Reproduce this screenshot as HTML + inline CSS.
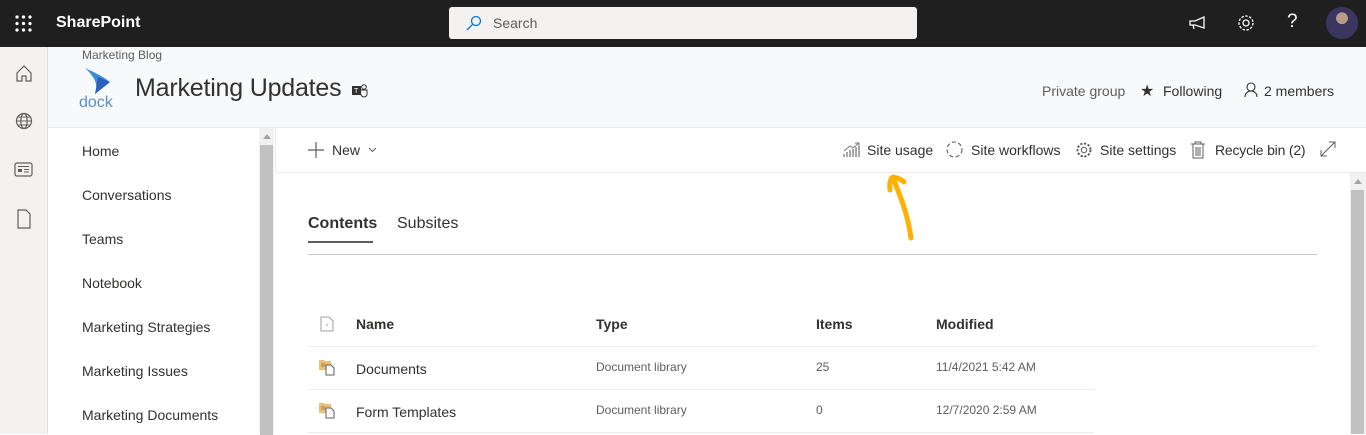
<!DOCTYPE html>
<html><head><meta charset="utf-8"><style>
*{box-sizing:border-box;margin:0;padding:0}
body{width:1366px;height:434px;overflow:hidden;font-family:"Segoe UI","Liberation Sans",sans-serif;background:#fff;color:#323130;position:relative}
.abs{position:absolute}
#top{left:0;top:0;width:1366px;height:47px;background:#1f1f1f}
#rail{left:0;top:47px;width:48px;height:387px;background:#f3f2f1;border-right:1px solid #e1dfdd}
#hdr{left:48px;top:47px;width:1318px;height:81px;background:#f8f9fa;border-bottom:1px solid #edebe9}
#nav{left:48px;top:128px;width:211px;height:306px;background:#fff}
.nv{position:absolute;left:82px;font-size:14px;color:#323130}
#nsb{left:259px;top:128px;width:15px;height:306px;background:#f1f1f1}
#cmd{left:275px;top:128px;width:1091px;height:45px;border-bottom:1px solid #edebe9;border-left:1px solid #edebe9}
.t{position:absolute;font-size:14px;white-space:nowrap}
.hl{position:absolute;height:1px;background:#edebe9}
</style></head><body>
<div id="top" class="abs">
 <svg class="abs" style="left:15px;top:15px" width="17" height="17"><g fill="#fff"><circle cx="2" cy="2" r="1.6"/><circle cx="8.5" cy="2" r="1.6"/><circle cx="15" cy="2" r="1.6"/><circle cx="2" cy="8.5" r="1.6"/><circle cx="8.5" cy="8.5" r="1.6"/><circle cx="15" cy="8.5" r="1.6"/><circle cx="2" cy="15" r="1.6"/><circle cx="8.5" cy="15" r="1.6"/><circle cx="15" cy="15" r="1.6"/></g></svg>
 <div class="t" style="left:56px;top:14px;color:#fff;font-weight:bold;font-size:16px">SharePoint</div>
 <div class="abs" style="left:449px;top:7px;width:468px;height:32px;background:#f3f2f1;border-radius:3px"></div>
 <svg class="abs" style="left:466px;top:15px" width="16" height="16"><circle cx="10" cy="6" r="4.5" fill="none" stroke="#0078d4" stroke-width="1.3"/><line x1="6.8" y1="9.2" x2="1" y2="15" stroke="#0078d4" stroke-width="1.3"/></svg>
 <div class="t" style="left:493px;top:15px;color:#605e5c">Search</div>
 <svg class="abs" style="left:1188px;top:14px" width="20" height="18"><path d="M2 7h5l9-4v11l-9-3H2z M5 11l1 4" fill="none" stroke="#fff" stroke-width="1.3"/></svg>
 <svg class="abs" style="left:1236px;top:13px" width="20" height="20"><circle cx="10" cy="10" r="3" fill="none" stroke="#fff" stroke-width="1.3"/><circle cx="10" cy="10" r="7" fill="none" stroke="#fff" stroke-width="1.3" stroke-dasharray="2.5 1.5"/></svg>
 <div class="t" style="left:1287px;top:11px;color:#fff;font-size:19px">?</div>
 <div class="abs" style="left:1326px;top:7px;width:32px;height:32px;border-radius:50%;background:radial-gradient(circle at 50% 35%,#b89a88 0 22%,#3b3660 23% 100%),#888"></div>
</div>
<div id="rail" class="abs">
 <svg class="abs" style="left:15px;top:17px" width="18" height="18"><path d="M2 9L9 2l7 7v8h-5v-5H7v5H2z" fill="none" stroke="#605e5c" stroke-width="1.2"/></svg>
 <svg class="abs" style="left:15px;top:65px" width="18" height="18"><circle cx="9" cy="9" r="7.5" fill="none" stroke="#605e5c" stroke-width="1.2"/><ellipse cx="9" cy="9" rx="3.2" ry="7.5" fill="none" stroke="#605e5c" stroke-width="1.2"/><path d="M1.5 9h15M3 5h12M3 13h12" stroke="#605e5c" stroke-width="1.1"/></svg>
 <svg class="abs" style="left:14px;top:115px" width="20" height="16"><rect x="1" y="1" width="17" height="13" rx="2" fill="none" stroke="#605e5c" stroke-width="1.2"/><rect x="4" y="7" width="4" height="3" fill="#605e5c"/><path d="M4 4.5h11M10 7.5h5M10 10h5" stroke="#605e5c"/></svg>
 <svg class="abs" style="left:17px;top:162px" width="14" height="20"><path d="M1 1h8l4 4v14H1z" fill="none" stroke="#605e5c" stroke-width="1.2"/></svg>
</div>
<div id="hdr" class="abs">
 <div class="t" style="left:34px;top:1px;font-size:12px;color:#605e5c">Marketing Blog</div>
 <svg class="abs" style="left:35px;top:20px" width="30" height="28"><path d="M2 1C8 4 18 8 27 15L12 27C15 20 14 12 2 1z" fill="#3a8fd6"/><path d="M15 10L27 15 12 27z" fill="#2d5fbf"/></svg>
 <div class="t" style="left:31px;top:47px;font-size:16px;color:#5a8fc8">dock</div>
 <div class="t" style="left:87px;top:27px;font-size:25px;color:#323130;letter-spacing:-0.2px">Marketing Updates</div>
 <svg class="abs" style="left:303px;top:35px" width="18" height="16"><rect x="1" y="4" width="9" height="9" fill="#323130"/><circle cx="13" cy="5" r="2.3" fill="none" stroke="#323130"/><path d="M9 8h7v4a3 3 0 0 1-6 0" fill="none" stroke="#323130"/><text x="3" y="11" font-size="7" fill="#fff">T</text></svg>
 <div class="t" style="left:994px;top:36px;color:#605e5c">Private group</div>
 <div class="t" style="left:1092px;top:34px;font-size:16px;color:#323130">★</div>
 <div class="t" style="left:1115px;top:36px;color:#323130">Following</div>
 <svg class="abs" style="left:1196px;top:35px" width="14" height="16"><circle cx="7" cy="5" r="4" fill="none" stroke="#323130" stroke-width="1.1"/><path d="M1 15c0-4 3-6 6-6s6 2 6 6" fill="none" stroke="#323130" stroke-width="1.1"/></svg>
 <div class="t" style="left:1216px;top:36px;color:#323130">2 members</div>
</div>
<div id="nav" class="abs"></div>
<div class="nv" style="top:143px">Home</div>
<div class="nv" style="top:187px">Conversations</div>
<div class="nv" style="top:231px">Teams</div>
<div class="nv" style="top:275px">Notebook</div>
<div class="nv" style="top:319px">Marketing Strategies</div>
<div class="nv" style="top:363px">Marketing Issues</div>
<div class="nv" style="top:407px">Marketing Documents</div>
<div id="nsb" class="abs"><div class="abs" style="left:4px;top:6px;border:4px solid transparent;border-bottom:5px solid #a3a3a3;border-top:0"></div><div class="abs" style="left:1px;top:17px;width:13px;height:290px;background:#c1c1c1"></div></div>
<div id="cmd" class="abs"></div>
<svg class="abs" style="left:308px;top:142px" width="16" height="16"><path d="M8 0v16M0 8h16" stroke="#605e5c" stroke-width="1.2"/></svg>
<div class="t" style="left:332px;top:142px">New</div>
<svg class="abs" style="left:368px;top:147px" width="9" height="6"><path d="M1 1l3.5 3.5L8 1" fill="none" stroke="#605e5c"/></svg>
<svg class="abs" style="left:843px;top:142px" width="18" height="16"><path d="M1 15V12M4 15V10M7 15V8M10 15V7M13 15V5M16 15V4" stroke="#7a7a7a" stroke-width="1.3"/><path d="M1 9L7 4l3 2 6-5M12 1h4v4" fill="none" stroke="#7a7a7a"/></svg>
<div class="t" style="left:867px;top:142px">Site usage</div>
<svg class="abs" style="left:945px;top:140px" width="19" height="19"><circle cx="9.5" cy="9.5" r="7.5" fill="none" stroke="#605e5c" stroke-width="1.1" stroke-dasharray="4 2.5"/></svg>
<div class="t" style="left:971px;top:142px">Site workflows</div>
<svg class="abs" style="left:1075px;top:141px" width="18" height="18"><circle cx="9" cy="9" r="2.7" fill="none" stroke="#605e5c"/><circle cx="9" cy="9" r="6.5" fill="none" stroke="#605e5c" stroke-width="2" stroke-dasharray="2.2 1.6"/></svg>
<div class="t" style="left:1100px;top:142px">Site settings</div>
<svg class="abs" style="left:1190px;top:141px" width="16" height="18"><path d="M1 3h14M5 3V1h6v2M3 3v14h10V3M6 6v9M8 6v9M10 6v9" fill="none" stroke="#605e5c"/></svg>
<div class="t" style="left:1215px;top:142px;letter-spacing:-0.2px">Recycle bin (2)</div>
<svg class="abs" style="left:1320px;top:141px" width="16" height="16"><path d="M1 15L15 1M9 1h6v6M1 9v6h6" fill="none" stroke="#605e5c"/></svg>
<div class="abs" style="left:1350px;top:173px;width:16px;height:261px;background:#f1f1f1"><div class="abs" style="left:4px;top:6px;border:4px solid transparent;border-bottom:5px solid #a3a3a3;border-top:0"></div><div class="abs" style="left:1px;top:17px;width:13px;height:244px;background:#c1c1c1"></div></div>
<svg class="abs" style="left:884px;top:170px" width="40" height="75"><path d="M6 20C5 12 7 8 9 7M9 7C14 8 18 10 20 12M9 8C16 25 24 45 27 68" fill="none" stroke="#ffb000" stroke-width="5" stroke-linecap="round"/></svg>
<div class="t" style="left:308px;top:215px;font-size:16px;color:#323130;font-weight:600">Contents</div>
<div class="abs" style="left:308px;top:241px;width:65px;height:2px;background:#605e5c"></div>
<div class="t" style="left:397px;top:215px;font-size:16px;color:#323130">Subsites</div>
<div class="hl" style="left:308px;top:254px;width:1009px;background:#c8c6c4"></div>
<svg class="abs" style="left:320px;top:316px" width="14" height="16"><path d="M1 1h8l4 4v10H1z" fill="#fff" stroke="#a19f9d"/><circle cx="7" cy="9" r=".6" fill="#a4262c"/></svg>
<div class="t" style="left:356px;top:316px;font-weight:600">Name</div>
<div class="t" style="left:596px;top:316px;font-weight:600">Type</div>
<div class="t" style="left:816px;top:316px;font-weight:600">Items</div>
<div class="t" style="left:936px;top:316px;font-weight:600">Modified</div>
<div class="hl" style="left:308px;top:346px;width:1009px"></div>
<svg class="abs" style="left:318px;top:358px" width="18" height="18"><path d="M1 2h5l1 1h6v9H1z" fill="#e8c07a"/><rect x="3" y="5" width="4" height="4" fill="#c9a05a"/><path d="M8 7h5l3 3v7H8z" fill="#fff" stroke="#605e5c"/></svg>
<div class="t" style="left:356px;top:361px">Documents</div>
<div class="t" style="left:596px;top:360px;font-size:12px;color:#605e5c">Document library</div>
<div class="t" style="left:816px;top:360px;font-size:12px;color:#605e5c">25</div>
<div class="t" style="left:936px;top:360px;font-size:12px;color:#605e5c">11/4/2021 5:42 AM</div>
<div class="hl" style="left:308px;top:389px;width:786px"></div>
<svg class="abs" style="left:318px;top:401px" width="18" height="18"><path d="M1 2h5l1 1h6v9H1z" fill="#e8c07a"/><rect x="3" y="5" width="4" height="4" fill="#c9a05a"/><path d="M8 7h5l3 3v7H8z" fill="#fff" stroke="#605e5c"/></svg>
<div class="t" style="left:356px;top:404px">Form Templates</div>
<div class="t" style="left:596px;top:403px;font-size:12px;color:#605e5c">Document library</div>
<div class="t" style="left:816px;top:403px;font-size:12px;color:#605e5c">0</div>
<div class="t" style="left:936px;top:403px;font-size:12px;color:#605e5c">12/7/2020 2:59 AM</div>
<div class="hl" style="left:308px;top:432px;width:786px"></div>
</body></html>
